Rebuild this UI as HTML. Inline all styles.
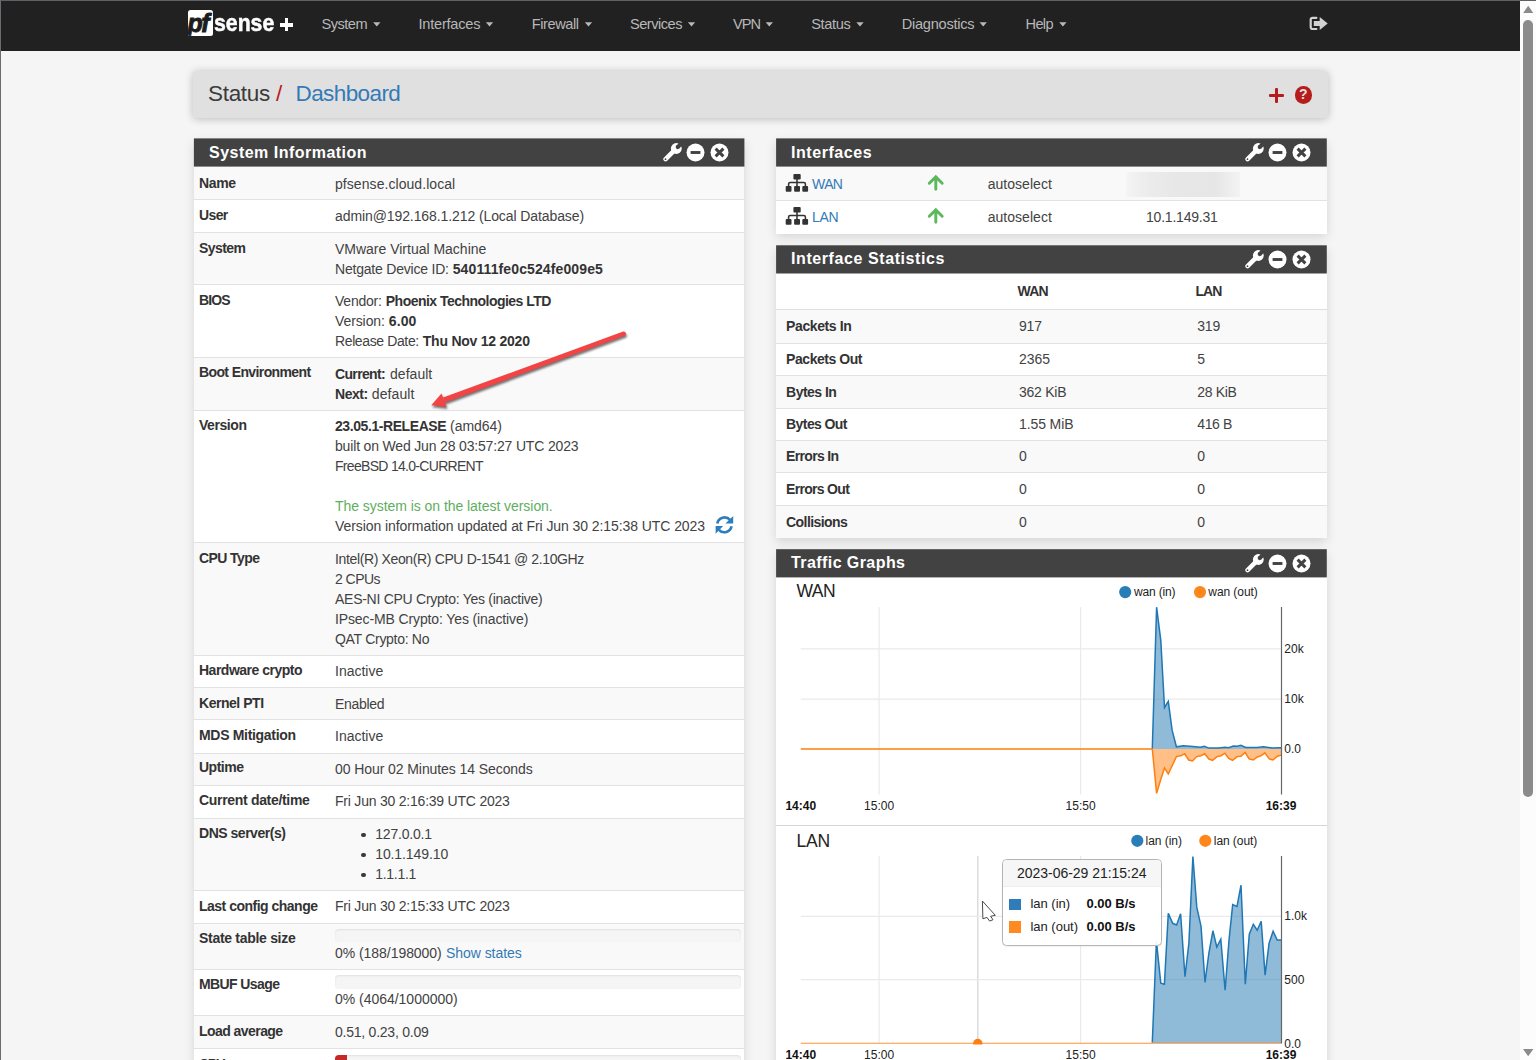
<!DOCTYPE html>
<html><head><meta charset="utf-8"><title>pfSense Dashboard</title>
<style>
*{box-sizing:border-box;margin:0;padding:0}
html,body{width:1536px;height:1060px;overflow:hidden}
body{position:relative;background:#f5f5f5;font-family:"Liberation Sans",sans-serif;font-size:14px;color:#333;line-height:20px}
.abs{position:absolute}
#frameL{left:0;top:0;width:1px;height:1060px;background:#6b6b73}
#frameT{left:0;top:0;width:1536px;height:1px;background:#5f5f67}
#nav{left:1px;top:1px;width:1519px;height:50px;background:#212121}
.ni{position:absolute;top:14px;font-size:14.6px;line-height:20px;color:#b8b8b8;white-space:nowrap}
.caret{position:absolute;top:22.4px;width:0;height:0;border-left:3.7px solid transparent;border-right:3.7px solid transparent;border-top:4.2px solid #b8b8b8}
#sb{left:1520px;top:1px;width:16px;height:1059px;background:#fcfcfc}
#sbthumb{left:1523px;top:20px;width:10px;height:777px;border-radius:5px;background:#8b8b8b}
#crumb{left:193px;top:71px;width:1135px;height:47px;background:#e0e0e0;border-radius:4px;box-shadow:0 1px 8px rgba(0,0,0,.24)}
.panel{position:absolute;background:#fff;box-shadow:0 4px 10px rgba(0,0,0,.13)}
.ph{position:absolute;left:0;top:0;width:100%;height:27.5px;background:#424242;color:#fff;font-weight:bold;font-size:16px;letter-spacing:.6px}
.ph span{position:absolute;left:15px;top:3.5px;white-space:nowrap}
.row{position:absolute;left:0;width:100%;border-top:1px solid #e0e0e0}
.odd{background:#f9f9f9}
.t{position:absolute;white-space:nowrap;color:#424242;z-index:3}
.lb{font-weight:bold;color:#333}
.hd{font-weight:bold;font-size:16px;color:#fff}
b{color:#2b2b2b}
a{color:#337ab7;text-decoration:none}
</style></head><body>
<div class="abs" id="nav"></div>
<div class="abs" id="frameT"></div><div class="abs" id="frameL"></div>
<div class="abs" id="sb"></div><div class="abs" id="sbthumb"></div>
<div class="abs" id="crumb"></div>

<div class="abs" style="left:188px;top:10px;width:24.8px;height:26px;background:#fff;border-radius:2.5px;overflow:hidden"><div style="position:absolute;left:-0.5px;top:-2.3px;font:italic bold 25px/30px 'Liberation Sans',sans-serif;color:#1c1c1c;-webkit-text-stroke:.9px #1c1c1c;letter-spacing:-1.6px;white-space:nowrap">pf</div></div>
<div class="abs" style="left:214.3px;top:7.6px;font:bold 24px/30px 'Liberation Sans',sans-serif;color:#fff;-webkit-text-stroke:.5px #fff;white-space:nowrap;transform:scaleX(.885);transform-origin:0 0">sense</div>
<div class="abs" style="left:280px;top:23px;width:13px;height:3.8px;background:#fff"></div>
<div class="abs" style="left:284.6px;top:18.4px;width:3.8px;height:13px;background:#fff"></div>
<svg class="abs" style="left:1309px;top:15px" width="20" height="17" viewBox="0 0 20 17"><path d="M7.400 2.800H3.700a2 2 0 0 0-2 2V12a2 2 0 0 0 2 2H7.400" fill="none" stroke="#d2d2d2" stroke-width="2.2" stroke-linecap="round"/><path d="M4.800 6H10.700V1.900L18.700 8.450L10.700 15.100V10.900H4.800z" fill="#d2d2d2"/></svg>


<div class="abs" style="left:1269px;top:93.7px;width:15.4px;height:3.1px;background:#b71c1c;border-radius:1px"></div>
<div class="abs" style="left:1275.1px;top:87.5px;width:3.1px;height:15.4px;background:#b71c1c;border-radius:1px"></div>
<div class="abs" style="left:1294.7px;top:86.4px;width:17.2px;height:17.2px;border-radius:50%;background:#b71c1c"></div>
<div class="abs" style="left:1294.7px;top:86.4px;width:17.2px;height:17.2px;text-align:center;font:bold 14px/17.6px 'Liberation Sans',sans-serif;color:#e0e0e0">?</div>

<div class="panel" style="left:194px;top:139px;width:550px;height:940px"></div>
<div class="abs" style="left:194px;top:166.2px;width:550px;height:33.10000000000002px;background:#f9f9f9;"></div>
<div class="abs" style="left:194px;top:199.3px;width:550px;height:32.79999999999998px;background:#fff;border-top:1px solid #e2e2e2;"></div>
<div class="abs" style="left:194px;top:232.1px;width:550px;height:52.29999999999998px;background:#f9f9f9;border-top:1px solid #e2e2e2;"></div>
<div class="abs" style="left:194px;top:284.4px;width:550px;height:72.30000000000001px;background:#fff;border-top:1px solid #e2e2e2;"></div>
<div class="abs" style="left:194px;top:356.7px;width:550px;height:53.5px;background:#f9f9f9;border-top:1px solid #e2e2e2;"></div>
<div class="abs" style="left:194px;top:410.2px;width:550px;height:132.09999999999997px;background:#fff;border-top:1px solid #e2e2e2;"></div>
<div class="abs" style="left:194px;top:542.3px;width:550px;height:112.40000000000009px;background:#f9f9f9;border-top:1px solid #e2e2e2;"></div>
<div class="abs" style="left:194px;top:654.7px;width:550px;height:32.69999999999993px;background:#fff;border-top:1px solid #e2e2e2;"></div>
<div class="abs" style="left:194px;top:687.4px;width:550px;height:32.0px;background:#f9f9f9;border-top:1px solid #e2e2e2;"></div>
<div class="abs" style="left:194px;top:719.4px;width:550px;height:33.200000000000045px;background:#fff;border-top:1px solid #e2e2e2;"></div>
<div class="abs" style="left:194px;top:752.6px;width:550px;height:32.69999999999993px;background:#f9f9f9;border-top:1px solid #e2e2e2;"></div>
<div class="abs" style="left:194px;top:785.3px;width:550px;height:32.5px;background:#fff;border-top:1px solid #e2e2e2;"></div>
<div class="abs" style="left:194px;top:817.8px;width:550px;height:72.30000000000007px;background:#f9f9f9;border-top:1px solid #e2e2e2;"></div>
<div class="abs" style="left:194px;top:890.1px;width:550px;height:32.39999999999998px;background:#fff;border-top:1px solid #e2e2e2;"></div>
<div class="abs" style="left:194px;top:922.5px;width:550px;height:46.0px;background:#f9f9f9;border-top:1px solid #e2e2e2;"></div>
<div class="abs" style="left:194px;top:968.5px;width:550px;height:46.700000000000045px;background:#fff;border-top:1px solid #e2e2e2;"></div>
<div class="abs" style="left:194px;top:1015.2px;width:550px;height:33.200000000000045px;background:#f9f9f9;border-top:1px solid #e2e2e2;"></div>
<div class="abs" style="left:194px;top:1048.4px;width:550px;height:41.59999999999991px;background:#fff;border-top:1px solid #e2e2e2;"></div>
<div class="abs" style="left:361.4px;top:832.8px;width:4.2px;height:4.2px;border-radius:50%;background:#3a3a3a"></div>
<div class="abs" style="left:361.4px;top:852.8px;width:4.2px;height:4.2px;border-radius:50%;background:#3a3a3a"></div>
<div class="abs" style="left:361.4px;top:872.8px;width:4.2px;height:4.2px;border-radius:50%;background:#3a3a3a"></div>
<div class="abs" style="left:335px;top:929px;width:405.5px;height:13.3px;border-radius:4px;background:#f5f5f5;box-shadow:inset 0 1px 2px rgba(0,0,0,.085)"></div>
<div class="abs" style="left:335px;top:975.3px;width:405.5px;height:13.3px;border-radius:4px;background:#f5f5f5;box-shadow:inset 0 1px 2px rgba(0,0,0,.085)"></div>
<div class="abs" style="left:335px;top:1054.5px;width:405.5px;height:13.3px;border-radius:4px;background:#f5f5f5;box-shadow:inset 0 1px 2px rgba(0,0,0,.085)"></div>
<div class="abs" style="left:335px;top:1054.5px;width:12px;height:13px;border-radius:4px 0 0 4px;background:#c62828"></div>
<svg class="abs" style="z-index:2;left:662.5px;top:143.1px" width="19" height="19" viewBox="0 0 19 19"><line x1="2.6" y1="16.2" x2="11.6" y2="7.2" stroke="#fff" stroke-width="4.5" stroke-linecap="round"/><circle cx="13.3" cy="5.5" r="5.4" fill="#fff"/><circle cx="14.7" cy="4.1" r="2.05" fill="#424242"/><rect x="14.7" y="2.05" width="8" height="4.100" transform="rotate(-45 14.7 4.1)" fill="#424242"/><circle cx="2.5" cy="16.2" r=".85" fill="#424242"/></svg>
<svg class="abs" style="z-index:2;left:685.8px;top:143.1px" width="19" height="19" viewBox="0 0 19 19"><circle cx="9.5" cy="9.5" r="9" fill="#fff"/><rect x="4.6" y="8.05" width="9.8" height="2.9" fill="#424242"/></svg>
<svg class="abs" style="z-index:2;left:710.0px;top:143.1px" width="19" height="19" viewBox="0 0 19 19"><circle cx="9.5" cy="9.5" r="9" fill="#fff"/><path d="M5.6 5.6L13.4 13.4M13.4 5.6L5.6 13.4" stroke="#424242" stroke-width="2.9"/></svg>
<svg class="abs" style="left:715px;top:515px" width="19" height="20" viewBox="0 0 19 20"><path d="M2.300 8.500A7.300 7.300 0 0 1 15 4.900" fill="none" stroke="#2d7dbf" stroke-width="2.700"/><path d="M18.200 .9V8.500H10.400z" fill="#2d7dbf"/><path d="M16.500 11.200A7.300 7.300 0 0 1 3.900 14.800" fill="none" stroke="#2d7dbf" stroke-width="2.700"/><path d="M.6 18.800V11.100H8.200z" fill="#2d7dbf"/></svg>
<div class="t hd" style="left:209px;top:143.1px;letter-spacing:0.480px;">System Information</div>
<div class="t lb" style="left:199px;top:173px;letter-spacing:-0.385px;">Name</div>
<div class="t lb" style="left:199px;top:205px;letter-spacing:-0.635px;">User</div>
<div class="t lb" style="left:199px;top:238px;letter-spacing:-0.552px;">System</div>
<div class="t lb" style="left:199px;top:290px;letter-spacing:-0.909px;">BIOS</div>
<div class="t lb" style="left:199px;top:362px;letter-spacing:-0.615px;">Boot Environment</div>
<div class="t lb" style="left:199px;top:415px;letter-spacing:-0.442px;">Version</div>
<div class="t lb" style="left:199px;top:548px;letter-spacing:-0.587px;">CPU Type</div>
<div class="t lb" style="left:199px;top:660px;letter-spacing:-0.499px;">Hardware crypto</div>
<div class="t lb" style="left:199px;top:693px;letter-spacing:-0.465px;">Kernel PTI</div>
<div class="t lb" style="left:199px;top:725px;letter-spacing:-0.315px;">MDS Mitigation</div>
<div class="t lb" style="left:199px;top:757px;letter-spacing:-0.492px;">Uptime</div>
<div class="t lb" style="left:199px;top:790px;letter-spacing:-0.319px;">Current date/time</div>
<div class="t lb" style="left:199px;top:823px;letter-spacing:-0.478px;">DNS server(s)</div>
<div class="t lb" style="left:199px;top:896px;letter-spacing:-0.504px;">Last config change</div>
<div class="t lb" style="left:199px;top:928px;letter-spacing:-0.297px;">State table size</div>
<div class="t lb" style="left:199px;top:974px;letter-spacing:-0.596px;">MBUF Usage</div>
<div class="t lb" style="left:199px;top:1021px;letter-spacing:-0.555px;">Load average</div>
<div class="t lb" style="left:199px;top:1054px;letter-spacing:-1.354px;">CPU</div>
<div class="t " style="left:335px;top:174px;letter-spacing:0.064px;">pfsense.cloud.local</div>
<div class="t " style="left:335px;top:206px;letter-spacing:-0.094px;">admin@192.168.1.212 (Local Database)</div>
<div class="t " style="left:335px;top:239px;letter-spacing:-0.008px;">VMware Virtual Machine</div>
<div class="t " style="left:335px;top:259px;letter-spacing:-0.206px;">Netgate Device ID:</div>
<div class="t lb" style="left:452.7px;top:259px;letter-spacing:0.118px;">540111fe0c524fe009e5</div>
<div class="t " style="left:335px;top:291px;letter-spacing:-0.238px;">Vendor:</div>
<div class="t lb" style="left:385.8px;top:291px;letter-spacing:-0.525px;">Phoenix Technologies LTD</div>
<div class="t " style="left:335px;top:311px;letter-spacing:-0.099px;">Version:</div>
<div class="t lb" style="left:388.8px;top:311px;letter-spacing:0.087px;">6.00</div>
<div class="t " style="left:335px;top:331px;letter-spacing:-0.378px;">Release Date:</div>
<div class="t lb" style="left:422.8px;top:331px;letter-spacing:-0.240px;">Thu Nov 12 2020</div>
<div class="t lb" style="left:335px;top:364px;letter-spacing:-0.654px;">Current:</div>
<div class="t " style="left:390px;top:364px;letter-spacing:0.036px;">default</div>
<div class="t lb" style="left:335px;top:384px;letter-spacing:-0.463px;">Next:</div>
<div class="t " style="left:371.8px;top:384px;letter-spacing:0.093px;">default</div>
<div class="t lb" style="left:335px;top:416px;letter-spacing:-0.420px;">23.05.1-RELEASE</div>
<div class="t " style="left:450px;top:416px;letter-spacing:-0.020px;">(amd64)</div>
<div class="t " style="left:335px;top:436px;letter-spacing:-0.167px;">built on Wed Jun 28 03:57:27 UTC 2023</div>
<div class="t " style="left:335px;top:456px;letter-spacing:-0.696px;">FreeBSD 14.0-CURRENT</div>
<div class="t " style="left:335px;top:496px;letter-spacing:-0.048px;color:#5fae5f">The system is on the latest version.</div>
<div class="t " style="left:335px;top:516px;letter-spacing:-0.075px;">Version information updated at Fri Jun 30 2:15:38 UTC 2023</div>
<div class="t " style="left:335px;top:549px;letter-spacing:-0.363px;">Intel(R) Xeon(R) CPU D-1541 @ 2.10GHz</div>
<div class="t " style="left:335px;top:569px;letter-spacing:-0.539px;">2 CPUs</div>
<div class="t " style="left:335px;top:589px;letter-spacing:-0.267px;">AES-NI CPU Crypto: Yes (inactive)</div>
<div class="t " style="left:335px;top:609px;letter-spacing:-0.118px;">IPsec-MB Crypto: Yes (inactive)</div>
<div class="t " style="left:335px;top:629px;letter-spacing:-0.293px;">QAT Crypto: No</div>
<div class="t " style="left:335px;top:661px;letter-spacing:-0.006px;">Inactive</div>
<div class="t " style="left:335px;top:694px;letter-spacing:-0.299px;">Enabled</div>
<div class="t " style="left:335px;top:726px;letter-spacing:-0.006px;">Inactive</div>
<div class="t " style="left:335px;top:759px;letter-spacing:-0.080px;">00 Hour 02 Minutes 14 Seconds</div>
<div class="t " style="left:335px;top:791px;letter-spacing:-0.217px;">Fri Jun 30 2:16:39 UTC 2023</div>
<div class="t " style="left:375.2px;top:824px;letter-spacing:-0.188px;">127.0.0.1</div>
<div class="t " style="left:375.2px;top:844px;letter-spacing:-0.097px;">10.1.149.10</div>
<div class="t " style="left:375.2px;top:864px;letter-spacing:-0.290px;">1.1.1.1</div>
<div class="t " style="left:335px;top:896px;letter-spacing:-0.217px;">Fri Jun 30 2:15:33 UTC 2023</div>
<div class="t " style="left:335px;top:943px;letter-spacing:-0.048px;">0% (188/198000)</div>
<div class="t " style="left:445.9px;top:943px;letter-spacing:-0.033px;color:#337ab7">Show states</div>
<div class="t " style="left:335px;top:989px;letter-spacing:-0.024px;">0% (4064/1000000)</div>
<div class="t " style="left:335px;top:1022px;letter-spacing:-0.238px;">0.51, 0.23, 0.09</div>
<svg class="abs" style="left:0;top:0;z-index:1" width="1536" height="600" viewBox="0 0 1536 600"><rect x="193.9" y="138.4" width="550.5" height="28.2" fill="#424242"/><rect x="776.1" y="138.4" width="550.7" height="28.2" fill="#424242"/><rect x="776.1" y="245.3" width="550.7" height="28.2" fill="#424242"/><rect x="776.1" y="549.1999999999999" width="550.7" height="28.2" fill="#424242"/></svg>
<div class="panel" style="left:776px;top:139px;width:551px;height:94px"></div>
<div class="abs" style="left:776.2px;top:166px;width:550.5px;height:34.5px;background:#f9f9f9"></div>
<div class="abs" style="left:776.2px;top:200px;width:550.5px;height:34px;background:#fff;border-top:1px solid #e2e2e2"></div>
<div class="abs" style="left:1126px;top:172px;width:114px;height:25px;background:linear-gradient(90deg,#f5f5f5 0,#f0f0f0 8%,#ebebeb 22%,#e7e7e7 45%,#e6e6e6 78%,#ededed 90%,#f3f3f3 100%)"></div>
<div class="panel" style="left:776px;top:246px;width:551px;height:292px"></div>
<div class="abs" style="left:776.2px;top:273px;width:550.5px;height:38px;background:#fff;border-bottom:2px solid #dfdfdf"></div>
<div class="abs" style="left:776.2px;top:310px;width:550.5px;height:33px;background:#f9f9f9;"></div>
<div class="abs" style="left:776.2px;top:343px;width:550.5px;height:32px;background:#fff;border-top:1px solid #e2e2e2;"></div>
<div class="abs" style="left:776.2px;top:375px;width:550.5px;height:33px;background:#f9f9f9;border-top:1px solid #e2e2e2;"></div>
<div class="abs" style="left:776.2px;top:408px;width:550.5px;height:32px;background:#fff;border-top:1px solid #e2e2e2;"></div>
<div class="abs" style="left:776.2px;top:440px;width:550.5px;height:32px;background:#f9f9f9;border-top:1px solid #e2e2e2;"></div>
<div class="abs" style="left:776.2px;top:472px;width:550.5px;height:33px;background:#fff;border-top:1px solid #e2e2e2;"></div>
<div class="abs" style="left:776.2px;top:505px;width:550.5px;height:33px;background:#f9f9f9;border-top:1px solid #e2e2e2;"></div>
<div class="panel" style="left:776px;top:550px;width:551px;height:519px"></div>
<svg class="abs" style="z-index:2;left:1244.7px;top:143.1px" width="19" height="19" viewBox="0 0 19 19"><line x1="2.6" y1="16.2" x2="11.6" y2="7.2" stroke="#fff" stroke-width="4.5" stroke-linecap="round"/><circle cx="13.3" cy="5.5" r="5.4" fill="#fff"/><circle cx="14.7" cy="4.1" r="2.05" fill="#424242"/><rect x="14.7" y="2.05" width="8" height="4.100" transform="rotate(-45 14.7 4.1)" fill="#424242"/><circle cx="2.5" cy="16.2" r=".85" fill="#424242"/></svg>
<svg class="abs" style="z-index:2;left:1268.0px;top:143.1px" width="19" height="19" viewBox="0 0 19 19"><circle cx="9.5" cy="9.5" r="9" fill="#fff"/><rect x="4.6" y="8.05" width="9.8" height="2.9" fill="#424242"/></svg>
<svg class="abs" style="z-index:2;left:1292.2px;top:143.1px" width="19" height="19" viewBox="0 0 19 19"><circle cx="9.5" cy="9.5" r="9" fill="#fff"/><path d="M5.6 5.6L13.4 13.4M13.4 5.6L5.6 13.4" stroke="#424242" stroke-width="2.9"/></svg>
<svg class="abs" style="z-index:2;left:1244.7px;top:250.0px" width="19" height="19" viewBox="0 0 19 19"><line x1="2.6" y1="16.2" x2="11.6" y2="7.2" stroke="#fff" stroke-width="4.5" stroke-linecap="round"/><circle cx="13.3" cy="5.5" r="5.4" fill="#fff"/><circle cx="14.7" cy="4.1" r="2.05" fill="#424242"/><rect x="14.7" y="2.05" width="8" height="4.100" transform="rotate(-45 14.7 4.1)" fill="#424242"/><circle cx="2.5" cy="16.2" r=".85" fill="#424242"/></svg>
<svg class="abs" style="z-index:2;left:1268.0px;top:250.0px" width="19" height="19" viewBox="0 0 19 19"><circle cx="9.5" cy="9.5" r="9" fill="#fff"/><rect x="4.6" y="8.05" width="9.8" height="2.9" fill="#424242"/></svg>
<svg class="abs" style="z-index:2;left:1292.2px;top:250.0px" width="19" height="19" viewBox="0 0 19 19"><circle cx="9.5" cy="9.5" r="9" fill="#fff"/><path d="M5.6 5.6L13.4 13.4M13.4 5.6L5.6 13.4" stroke="#424242" stroke-width="2.9"/></svg>
<svg class="abs" style="z-index:2;left:1244.7px;top:554.1px" width="19" height="19" viewBox="0 0 19 19"><line x1="2.6" y1="16.2" x2="11.6" y2="7.2" stroke="#fff" stroke-width="4.5" stroke-linecap="round"/><circle cx="13.3" cy="5.5" r="5.4" fill="#fff"/><circle cx="14.7" cy="4.1" r="2.05" fill="#424242"/><rect x="14.7" y="2.05" width="8" height="4.100" transform="rotate(-45 14.7 4.1)" fill="#424242"/><circle cx="2.5" cy="16.2" r=".85" fill="#424242"/></svg>
<svg class="abs" style="z-index:2;left:1268.0px;top:554.1px" width="19" height="19" viewBox="0 0 19 19"><circle cx="9.5" cy="9.5" r="9" fill="#fff"/><rect x="4.6" y="8.05" width="9.8" height="2.9" fill="#424242"/></svg>
<svg class="abs" style="z-index:2;left:1292.2px;top:554.1px" width="19" height="19" viewBox="0 0 19 19"><circle cx="9.5" cy="9.5" r="9" fill="#fff"/><path d="M5.6 5.6L13.4 13.4M13.4 5.6L5.6 13.4" stroke="#424242" stroke-width="2.9"/></svg>
<svg class="abs" style="left:785px;top:173px" width="24" height="19" viewBox="0 0 24 19"><rect x="8.4" y="0.9" width="7.3" height="5.6" rx="1" fill="#333"/><rect x="0.7" y="13" width="5.8" height="5.7" rx="1" fill="#333"/><rect x="9.1" y="13" width="5.9" height="5.7" rx="1" fill="#333"/><rect x="17.3" y="13" width="5.8" height="5.700" rx="1" fill="#333"/><path d="M12 6v7M3.6 13.4v-2.300q0-1.600 1.600-1.600h13.600q1.600 0 1.600 1.600v2.300" fill="none" stroke="#333" stroke-width="1.55"/></svg>
<svg class="abs" style="left:785px;top:206px" width="24" height="19" viewBox="0 0 24 19"><rect x="8.4" y="0.9" width="7.3" height="5.6" rx="1" fill="#333"/><rect x="0.7" y="13" width="5.8" height="5.7" rx="1" fill="#333"/><rect x="9.1" y="13" width="5.9" height="5.7" rx="1" fill="#333"/><rect x="17.3" y="13" width="5.8" height="5.700" rx="1" fill="#333"/><path d="M12 6v7M3.6 13.4v-2.300q0-1.600 1.600-1.600h13.600q1.600 0 1.600 1.600v2.300" fill="none" stroke="#333" stroke-width="1.55"/></svg>
<svg class="abs" style="left:926px;top:173px" width="20" height="19" viewBox="0 0 20 19"><path d="M3.300 10.300L9.800 3.900L16.200 10.300M9.800 4.400V16.200" fill="none" stroke="#5cb85c" stroke-width="2.9" stroke-linecap="round" stroke-linejoin="miter"/></svg>
<svg class="abs" style="left:926px;top:206px" width="20" height="19" viewBox="0 0 20 19"><path d="M3.300 10.300L9.800 3.900L16.200 10.300M9.800 4.400V16.200" fill="none" stroke="#5cb85c" stroke-width="2.9" stroke-linecap="round" stroke-linejoin="miter"/></svg>
<div class="abs" style="left:776.2px;top:577px;width:550.5px;height:500px;background:#fff"></div>
<div class="abs" style="left:776.2px;top:824.8px;width:550.5px;height:1.3px;background:#d4d4d4"></div>
<svg class="abs" style="left:0;top:0" width="1536" height="1060" viewBox="0 0 1536 1060"><line x1="879.1" y1="607" x2="879.1" y2="794.5" stroke="#eaeaea" stroke-width="1.2"/><line x1="1080.6" y1="607" x2="1080.6" y2="794.5" stroke="#eaeaea" stroke-width="1.2"/><line x1="800.8" y1="648.8" x2="1281.5" y2="648.8" stroke="#eaeaea" stroke-width="1.2"/><line x1="800.8" y1="699.1" x2="1281.5" y2="699.1" stroke="#eaeaea" stroke-width="1.2"/><polygon points="1152.3,748.9 1156.6,607.2 1160.8,640.6 1164.5,707.5 1168.3,701.5 1172.1,730.2 1176.4,746.8 1183.4,745.7 1192.8,746.4 1200.4,747.2 1204.2,746.2 1208.9,748.1 1219.2,748.1 1224.9,747.2 1228.7,747.7 1233.4,746.0 1237.2,746.2 1240.9,745.3 1245.7,747.5 1257.0,747.5 1263.6,746.8 1272.1,748.1 1281.1,747.7 1281.1,749 1152.3,749" fill="#1f77b4" fill-opacity=".5"/><polygon points="1152.3,749.0 1156.6,793.4 1160.8,779.2 1164.5,767.9 1168.3,774.0 1176.4,756.6 1180.6,755.8 1184.7,753.8 1188.7,760.0 1192.5,761.0 1196.6,756.6 1200.8,755.7 1204.7,753.8 1208.9,759.0 1212.6,760.4 1217.0,756.6 1221.1,755.7 1224.9,753.2 1228.7,758.5 1232.5,760.4 1237.2,756.6 1240.9,756.2 1245.1,752.5 1249.1,758.9 1253.2,760.0 1257.4,757.0 1261.3,755.7 1264.9,752.8 1269.2,758.9 1273.0,760.0 1277.4,756.2 1281.1,755.1 1281.1,749" fill="#ff7f0e" fill-opacity=".5"/><polyline points="1152.3,748.9 1156.6,607.2 1160.8,640.6 1164.5,707.5 1168.3,701.5 1172.1,730.2 1176.4,746.8 1183.4,745.7 1192.8,746.4 1200.4,747.2 1204.2,746.2 1208.9,748.1 1219.2,748.1 1224.9,747.2 1228.7,747.7 1233.4,746.0 1237.2,746.2 1240.9,745.3 1245.7,747.5 1257.0,747.5 1263.6,746.8 1272.1,748.1 1281.1,747.7" fill="none" stroke="#1f77b4" stroke-width="1.5"/><polyline points="800.8,749 1152.3,749.0 1156.6,793.4 1160.8,779.2 1164.5,767.9 1168.3,774.0 1176.4,756.6 1180.6,755.8 1184.7,753.8 1188.7,760.0 1192.5,761.0 1196.6,756.6 1200.8,755.7 1204.7,753.8 1208.9,759.0 1212.6,760.4 1217.0,756.6 1221.1,755.7 1224.9,753.2 1228.7,758.5 1232.5,760.4 1237.2,756.6 1240.9,756.2 1245.1,752.5 1249.1,758.9 1253.2,760.0 1257.4,757.0 1261.3,755.7 1264.9,752.8 1269.2,758.9 1273.0,760.0 1277.4,756.2 1281.1,755.1" fill="none" stroke="#ff7f0e" stroke-width="1.500"/><line x1="1281.5" y1="607" x2="1281.5" y2="794.5" stroke="#666" stroke-width="1.2"/><line x1="879.1" y1="856" x2="879.1" y2="1043.4" stroke="#eaeaea" stroke-width="1.2"/><line x1="1080.6" y1="856" x2="1080.6" y2="1043.4" stroke="#eaeaea" stroke-width="1.2"/><line x1="977.8" y1="856" x2="977.8" y2="1043.4" stroke="#d4d4d4" stroke-width="1.2"/><line x1="800.8" y1="916.4" x2="1281.5" y2="916.4" stroke="#eaeaea" stroke-width="1.2"/><line x1="800.8" y1="979.7" x2="1281.5" y2="979.7" stroke="#eaeaea" stroke-width="1.2"/><polygon points="1152.3,1042.5 1156.4,941.1 1160.8,983.1 1164.4,984.3 1168.3,913.4 1172.7,923.3 1176.6,924.9 1180.6,913.8 1185.0,976.7 1188.9,943.1 1192.9,856.5 1196.8,907.4 1201.0,926.2 1205.0,982.3 1208.9,953.0 1212.9,930.8 1216.8,947.0 1220.8,939.1 1225.1,990.2 1229.1,939.1 1232.7,904.5 1237.0,906.4 1241.0,885.2 1245.3,984.3 1249.3,934.2 1253.3,924.3 1257.2,930.2 1261.2,921.3 1265.1,975.1 1269.1,943.1 1273.1,931.2 1277.2,940.1 1281.2,940.1 1281.2,1043 1152.3,1043" fill="#1f77b4" fill-opacity=".5"/><polyline points="1152.3,1042.5 1156.4,941.1 1160.8,983.1 1164.4,984.3 1168.3,913.4 1172.7,923.3 1176.6,924.9 1180.6,913.8 1185.0,976.7 1188.9,943.1 1192.9,856.5 1196.8,907.4 1201.0,926.2 1205.0,982.3 1208.9,953.0 1212.9,930.8 1216.8,947.0 1220.8,939.1 1225.1,990.2 1229.1,939.1 1232.7,904.5 1237.0,906.4 1241.0,885.2 1245.3,984.3 1249.3,934.2 1253.3,924.3 1257.2,930.2 1261.2,921.3 1265.1,975.1 1269.1,943.1 1273.1,931.2 1277.2,940.1 1281.2,940.1" fill="none" stroke="#1f77b4" stroke-width="1.500"/><line x1="800.8" y1="1043.2" x2="1281.5" y2="1043.2" stroke="#ff7f0e" stroke-width="1.1" stroke-opacity=".85"/><line x1="1281.5" y1="856" x2="1281.5" y2="1043.4" stroke="#666" stroke-width="1.200"/><clipPath id="cpd"><rect x="960" y="1030" width="40" height="14.400"/></clipPath><circle cx="977.8" cy="1043.5" r="4.700" fill="#ff7f0e" clip-path="url(#cpd)"/><circle cx="1125.2" cy="592.1" r="6.100" fill="#1f77b4" fill-opacity=".95"/><circle cx="1200" cy="592.1" r="6.100" fill="#ff7f0e" fill-opacity=".95"/><circle cx="1137.3" cy="840.8" r="6.100" fill="#1f77b4" fill-opacity=".95"/><circle cx="1205.3" cy="840.8" r="6.100" fill="#ff7f0e" fill-opacity=".95"/></svg>
<div class="abs" style="left:1002px;top:858.6px;width:160px;height:87px;background:rgba(255,255,255,.93);border:1px solid #b4b4b4;border-radius:4.5px;box-shadow:0 1px 2px rgba(0,0,0,.05);overflow:hidden"><div style="height:27.5px;background:rgba(246,246,246,.95);border-bottom:1px solid #eeeeee"></div></div>
<div class="abs" style="left:1009.3px;top:898.6px;width:12.2px;height:11.8px;background:#2e7dba"></div>
<div class="abs" style="left:1009.3px;top:920.9px;width:12.2px;height:11.8px;background:#ff8a22"></div>
<svg class="abs" style="left:981px;top:900px;z-index:4" width="17" height="24" viewBox="0 0 17 24"><path d="M1.400 1L14.300 15.300L9.600 16.300L12 19.700L8.700 21.100L5.900 17.400L1.900 18.800z" fill="#fff" stroke="#4a4a4a" stroke-width="1" stroke-linejoin="round"/></svg>
<svg class="abs" style="left:420px;top:320px;filter:drop-shadow(1.2px 2px 1.3px rgba(0,0,0,.55))" width="220" height="100" viewBox="420 320 220 100"><path d="M623.2 331.500a2.300 2.300 0 0 1 1.500 4.300L445 402.500L443 397.600z" fill="#f24444"/><path d="M431.200 405.200L441.500 393.600L446.600 406.900z" fill="#f24444"/></svg>
<svg class="abs" style="left:1520px;top:0px" width="16" height="1060" viewBox="1520 0 16 1060"><path d="M1523.200 13L1528.200 5.800L1533.300 13zM1523 1049L1533.400 1049L1528.200 1056.200z" fill="#8a8a8a"/></svg>
<svg class="abs" style="left:0;top:0" width="1536" height="51" viewBox="0 0 1536 51"><path d="M373.15 22.300h7.300l-3.650 4.100zM485.85 22.300h7.300l-3.650 4.100zM584.85 22.300h7.300l-3.650 4.100zM687.85 22.300h7.300l-3.650 4.100zM765.65 22.300h7.300l-3.650 4.100zM856.35 22.300h7.300l-3.650 4.100zM979.55 22.300h7.300l-3.650 4.100zM1059.25 22.300h7.300l-3.650 4.100z" fill="#b8b8b8"/></svg>
<div class="t hd" style="left:791px;top:143px;letter-spacing:0.561px;">Interfaces</div>
<div class="t " style="left:812.1px;top:173.8px;letter-spacing:-0.652px;color:#337ab7">WAN</div>
<div class="t " style="left:987.7px;top:173.8px;letter-spacing:0.037px;">autoselect</div>
<div class="t " style="left:812.1px;top:207px;letter-spacing:-0.378px;color:#337ab7">LAN</div>
<div class="t " style="left:987.7px;top:207px;letter-spacing:0.037px;">autoselect</div>
<div class="t " style="left:1146px;top:207px;letter-spacing:-0.206px;">10.1.149.31</div>
<div class="t hd" style="left:791px;top:249px;letter-spacing:0.586px;">Interface Statistics</div>
<div class="t lb" style="left:1017.6px;top:281px;letter-spacing:-0.824px;">WAN</div>
<div class="t lb" style="left:1195.4px;top:281px;letter-spacing:-0.894px;">LAN</div>
<div class="t lb" style="left:786.1px;top:316px;letter-spacing:-0.397px;">Packets In</div>
<div class="t " style="left:1019px;top:316px;letter-spacing:-0.220px;">917</div>
<div class="t " style="left:1197.3px;top:316px;letter-spacing:-0.220px;">319</div>
<div class="t lb" style="left:786.1px;top:349px;letter-spacing:-0.458px;">Packets Out</div>
<div class="t " style="left:1019px;top:349px;letter-spacing:-0.039px;">2365</div>
<div class="t " style="left:1197.3px;top:349px;letter-spacing:-0.197px;">5</div>
<div class="t lb" style="left:786.1px;top:382px;letter-spacing:-0.534px;">Bytes In</div>
<div class="t " style="left:1019px;top:382px;letter-spacing:-0.250px;">362 KiB</div>
<div class="t " style="left:1197.3px;top:382px;letter-spacing:-0.325px;">28 KiB</div>
<div class="t lb" style="left:786.1px;top:414px;letter-spacing:-0.592px;">Bytes Out</div>
<div class="t " style="left:1019px;top:414px;letter-spacing:-0.106px;">1.55 MiB</div>
<div class="t " style="left:1197.3px;top:414px;letter-spacing:-0.379px;">416 B</div>
<div class="t lb" style="left:786.1px;top:446px;letter-spacing:-0.662px;">Errors In</div>
<div class="t " style="left:1019px;top:446px;letter-spacing:-0.597px;">0</div>
<div class="t " style="left:1197.3px;top:446px;letter-spacing:-0.597px;">0</div>
<div class="t lb" style="left:786.1px;top:479px;letter-spacing:-0.702px;">Errors Out</div>
<div class="t " style="left:1019px;top:479px;letter-spacing:-0.597px;">0</div>
<div class="t " style="left:1197.3px;top:479px;letter-spacing:-0.597px;">0</div>
<div class="t lb" style="left:786.1px;top:512px;letter-spacing:-0.581px;">Collisions</div>
<div class="t " style="left:1019px;top:512px;letter-spacing:-0.597px;">0</div>
<div class="t " style="left:1197.3px;top:512px;letter-spacing:-0.597px;">0</div>
<div class="t hd" style="left:791px;top:553px;letter-spacing:0.423px;">Traffic Graphs</div>
<div class="t " style="left:796.5px;top:579.5px;letter-spacing:-0.562px;color:#222;font-size:17.5px;line-height:22px">WAN</div>
<div class="t " style="left:796.5px;top:829.5px;letter-spacing:-0.182px;color:#222;font-size:17.5px;line-height:22px">LAN</div>
<div class="t " style="left:1133.9px;top:585px;letter-spacing:-0.148px;color:#222;font-size:12px;line-height:14px;">wan (in)</div>
<div class="t " style="left:1208.3px;top:585px;letter-spacing:-0.070px;color:#222;font-size:12px;line-height:14px;">wan (out)</div>
<div class="t " style="left:1145.5px;top:833.8px;letter-spacing:-0.036px;color:#222;font-size:12px;line-height:14px;">lan (in)</div>
<div class="t " style="left:1213.8px;top:833.8px;letter-spacing:-0.070px;color:#222;font-size:12px;line-height:14px;">lan (out)</div>
<div class="t " style="left:1284.3px;top:641.8px;color:#222;font-size:12px;line-height:14px;">20k</div>
<div class="t " style="left:1284.3px;top:692px;color:#222;font-size:12px;line-height:14px;">10k</div>
<div class="t " style="left:1284.3px;top:741.6px;color:#222;font-size:12px;line-height:14px;">0.0</div>
<div class="t " style="left:1284.3px;top:909.3px;color:#222;font-size:12px;line-height:14px;">1.0k</div>
<div class="t " style="left:1284.3px;top:972.6px;color:#222;font-size:12px;line-height:14px;">500</div>
<div class="t " style="left:1284.3px;top:1037px;color:#222;font-size:12px;line-height:14px;">0.0</div>
<div class="t " style="left:775.8px;top:799px;color:#222;font-size:12px;line-height:14px;width:50px;text-align:center;font-weight:bold;color:#111;">14:40</div>
<div class="t " style="left:854.1px;top:799px;color:#222;font-size:12px;line-height:14px;width:50px;text-align:center;">15:00</div>
<div class="t " style="left:1055.6px;top:799px;color:#222;font-size:12px;line-height:14px;width:50px;text-align:center;">15:50</div>
<div class="t " style="left:1256px;top:799px;color:#222;font-size:12px;line-height:14px;width:50px;text-align:center;font-weight:bold;color:#111;">16:39</div>
<div class="t " style="left:775.8px;top:1048px;color:#222;font-size:12px;line-height:14px;width:50px;text-align:center;font-weight:bold;color:#111;">14:40</div>
<div class="t " style="left:854.1px;top:1048px;color:#222;font-size:12px;line-height:14px;width:50px;text-align:center;">15:00</div>
<div class="t " style="left:1055.6px;top:1048px;color:#222;font-size:12px;line-height:14px;width:50px;text-align:center;">15:50</div>
<div class="t " style="left:1256px;top:1048px;color:#222;font-size:12px;line-height:14px;width:50px;text-align:center;font-weight:bold;color:#111;">16:39</div>
<div class="t " style="left:1017px;top:863.5px;letter-spacing:-0.026px;color:#222;font-size:14px;line-height:18px">2023-06-29 21:15:24</div>
<div class="t " style="left:1030.5px;top:896px;letter-spacing:-0.031px;color:#222;font-size:13px;line-height:16px;">lan (in)</div>
<div class="t " style="left:1030.5px;top:919px;letter-spacing:-0.023px;color:#222;font-size:13px;line-height:16px;">lan (out)</div>
<div class="t " style="left:1086.5px;top:896px;letter-spacing:-0.020px;color:#222;font-size:13px;line-height:16px;font-weight:bold;color:#111">0.00 B/s</div>
<div class="t " style="left:1086.5px;top:919px;letter-spacing:-0.020px;color:#222;font-size:13px;line-height:16px;font-weight:bold;color:#111">0.00 B/s</div>
<div class="t " style="left:321.4px;top:14px;letter-spacing:-0.476px;font-size:14.6px;line-height:20px;color:#b8b8b8">System</div>
<div class="t " style="left:418.5px;top:14px;letter-spacing:-0.239px;font-size:14.6px;line-height:20px;color:#b8b8b8">Interfaces</div>
<div class="t " style="left:531.8px;top:14px;letter-spacing:-0.435px;font-size:14.6px;line-height:20px;color:#b8b8b8">Firewall</div>
<div class="t " style="left:630px;top:14px;letter-spacing:-0.496px;font-size:14.6px;line-height:20px;color:#b8b8b8">Services</div>
<div class="t " style="left:733.1px;top:14px;letter-spacing:-1.072px;font-size:14.6px;line-height:20px;color:#b8b8b8">VPN</div>
<div class="t " style="left:811.2px;top:14px;letter-spacing:-0.346px;font-size:14.6px;line-height:20px;color:#b8b8b8">Status</div>
<div class="t " style="left:901.8px;top:14px;letter-spacing:-0.276px;font-size:14.6px;line-height:20px;color:#b8b8b8">Diagnostics</div>
<div class="t " style="left:1025.5px;top:14px;letter-spacing:-0.654px;font-size:14.6px;line-height:20px;color:#b8b8b8">Help</div>
<div class="t " style="left:208px;top:80px;letter-spacing:-0.299px;font-size:22.5px;line-height:28px;color:#3b3b3b">Status</div>
<div class="t " style="left:276px;top:80px;font-size:22.5px;line-height:28px;color:#b71c1c">/</div>
<div class="t " style="left:295.5px;top:80px;letter-spacing:-0.586px;font-size:22.5px;line-height:28px;color:#337ab7">Dashboard</div>
</body></html>
